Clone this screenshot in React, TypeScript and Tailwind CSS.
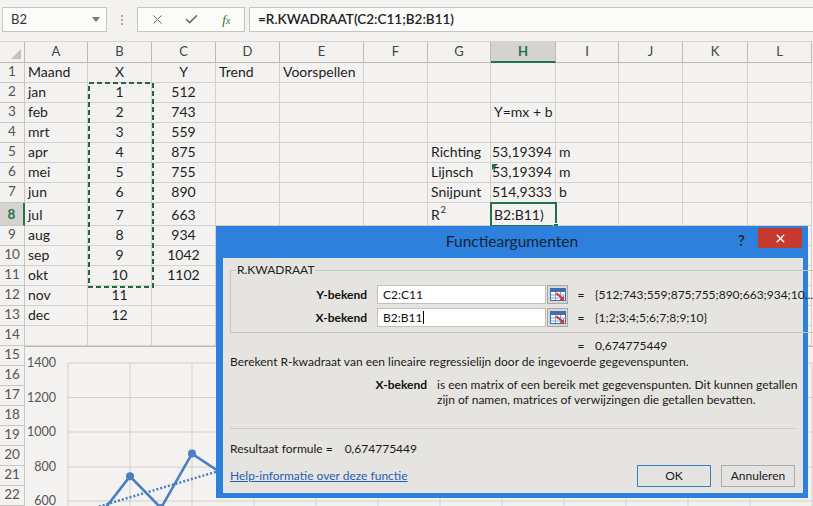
import React from "react";
import { X, Check } from "lucide-react";

const COLS = [
  { id: "A", w: "w-[63px]" },
  { id: "B", w: "w-[64px]" },
  { id: "C", w: "w-[64px]" },
  { id: "D", w: "w-[64px]" },
  { id: "E", w: "w-[84px]" },
  { id: "F", w: "w-[64px]" },
  { id: "G", w: "w-[63px]" },
  { id: "H", w: "w-[65px]" },
  { id: "I", w: "w-[63px]" },
  { id: "J", w: "w-[64px]" },
  { id: "K", w: "w-[65px]" },
  { id: "L", w: "w-[64px]" },
];

type Cell = { v: React.ReactNode; a?: "l" | "c" | "r" };

const months = ["jan", "feb", "mrt", "apr", "mei", "jun", "jul", "aug", "sep", "okt", "nov", "dec"];
const ys = [512, 743, 559, 875, 755, 890, 663, 934, 1042, 1102];

function buildData() {
  const d: Record<number, Record<string, Cell>> = {};
  for (let r = 1; r <= 22; r++) d[r] = {};
  d[1] = {
    A: { v: "Maand" },
    B: { v: "X", a: "c" },
    C: { v: "Y", a: "c" },
    D: { v: "Trend" },
    E: { v: "Voorspellen" },
  };
  months.forEach((m, i) => {
    d[i + 2].A = { v: m };
    d[i + 2].B = { v: String(i + 1), a: "c" };
    if (i < ys.length) d[i + 2].C = { v: String(ys[i]), a: "c" };
  });
  d[3].H = { v: "Y=mx + b" };
  d[5].G = { v: "Richting" };
  d[5].H = { v: "53,19394", a: "r" };
  d[5].I = { v: "m" };
  d[6].G = { v: "Lijnsch" };
  d[6].H = { v: "53,19394", a: "r" };
  d[6].I = { v: "m" };
  d[7].G = { v: "Snijpunt" };
  d[7].H = { v: "514,9333", a: "r" };
  d[7].I = { v: "b" };
  d[8].G = {
    v: (
      <span>
        R<sup className="text-[9px] top-[-7px] ml-[1px]">2</sup>
      </span>
    ),
  };
  d[8].H = { v: "B2:B11)" };
  return d;
}

const data = buildData();

function FormulaBar() {
  return (
    <div className="h-[42px] flex items-start pt-[7px] pl-[2px] border-b border-[#d8d6d3]">
      <div className="w-[105px] h-[25px] bg-[#fbfbfa] border border-[#c6c4c1] flex items-center justify-between pl-[8px] pr-[6px] text-[13px] text-[#333]">
        <span>B2</span>
        <svg width="8" height="5" viewBox="0 0 8 5">
          <path d="M0 0 L8 0 L4 5 Z" fill="#777" />
        </svg>
      </div>
      <div className="w-[30px] h-[25px] flex flex-col items-center justify-center gap-[2px]">
        <span className="w-[2px] h-[2px] bg-[#aaa]" />
        <span className="w-[2px] h-[2px] bg-[#aaa]" />
        <span className="w-[2px] h-[2px] bg-[#aaa]" />
      </div>
      <div className="w-[108px] h-[25px] bg-[#fbfbfa] border border-[#c6c4c1] flex items-center">
        <span className="w-[36px] flex justify-center pl-[4px]">
          <X size={15} strokeWidth={1.6} color="#6b6b6b" />
        </span>
        <span className="w-[36px] flex justify-center">
          <Check size={15} strokeWidth={2.6} color="#6b6b6b" />
        </span>
        <span className="w-[36px] flex justify-center items-baseline text-[13px] italic text-[#3f6b2a] font-['Liberation_Serif',serif]">
          f<span className="text-[10px]">x</span>
        </span>
      </div>
      <div className="flex-1 ml-[4px] h-[25px] bg-[#fbfbfa] border border-r-0 border-[#c6c4c1] flex items-center pl-[8px] text-[13.5px] font-semibold text-[#222]">
        =R.KWADRAAT(C2:C11;B2:B11)
      </div>
    </div>
  );
}

function HeaderRow() {
  return (
    <div className="flex h-[21px]">
      <div className="w-[25px] shrink-0 border-r border-b border-[#bdbbb8] flex items-end justify-end p-[3px]">
        <svg width="10" height="10" viewBox="0 0 10 10">
          <path d="M10 0 L10 10 L0 10 Z" fill="#c4c2bf" />
        </svg>
      </div>
      {COLS.map((c) =>
        c.id === "H" ? (
          <div
            key={c.id}
            className={`${c.w} shrink-0 bg-[#d5d3cf] border-r border-[#bdbbb8] border-b-2 border-b-[#217346] flex items-center justify-center text-[13px] font-bold text-[#217346]`}
          >
            {c.id}
          </div>
        ) : (
          <div
            key={c.id}
            className={`${c.w} shrink-0 border-r border-b border-[#bdbbb8] flex items-center justify-center text-[13px] text-[#444]`}
          >
            {c.id}
          </div>
        )
      )}
    </div>
  );
}

function Row({ r }: { r: number }) {
  const isActive = r === 8;
  return (
    <div className={`flex ${isActive ? "h-[23px]" : "h-[20px]"}`}>
      <div
        className={`w-[25px] shrink-0 border-b border-[#c9c7c4] flex items-end justify-center pb-[1px] text-[13.5px] ${
          isActive
            ? "bg-[#d5d3cf] border-r-2 border-r-[#217346] text-[#217346] font-bold"
            : "border-r text-[#555]"
        }`}
      >
        {r}
      </div>
      {COLS.map((c) => {
        const cell = data[r][c.id];
        const align = cell?.a === "c" ? "justify-center" : cell?.a === "r" ? "justify-end" : "justify-start";
        return (
          <div
            key={c.id}
            className={`${c.w} shrink-0 border-r border-b border-[#d3d1ce] flex items-end px-[3px] pb-[1px] leading-[18px] text-[14px] text-[#1e1e1e] whitespace-nowrap ${align}`}
          >
            {cell?.v}
          </div>
        );
      })}
    </div>
  );
}

function Chart() {
  const yOf = (v: number) => 153 - ((v - 600) / 200) * 34.5;
  const xOf = (i: number) => 74 + (i - 1) * 31;
  const pts = ys.map((v, i) => [xOf(i + 1), yOf(v)]);
  const grid = [15, 49.5, 84, 119, 153];
  const labels = ["1400", "1200", "1000", "800", "600"];
  const vlines = Array.from({ length: 13 }, (_, i) => 43 + i * 62);
  const t = (x: number) => 53.19394 * x + 514.9333;
  return (
    <div className="absolute left-[25px] top-[346px] w-[788px] h-[160px] bg-[#f3f2f0] border-t border-[#bcbab6]">
      <svg width="788" height="160" viewBox="0 -1 788 160">
        {grid.map((y) => (
          <line key={y} x1="43" x2="788" y1={y} y2={y} stroke="#d2d0cd" strokeWidth="1" />
        ))}
        {vlines.map((x) => (
          <line key={x} x1={x} x2={x} y1="15" y2="170" stroke="#d2d0cd" strokeWidth="1" />
        ))}
        {labels.map((l, i) => (
          <text key={l} x="31" y={grid[i] + 4} textAnchor="end" fontSize="12.5" fill="#555" fontFamily="Lato, sans-serif">
            {l}
          </text>
        ))}
        <line
          x1={xOf(0.5)}
          y1={yOf(t(0.5))}
          x2={xOf(12)}
          y2={yOf(t(12))}
          stroke="#4a7fc1"
          strokeWidth="2.5"
          strokeDasharray="2 2"
        />
        <polyline points={pts.map((p) => p.join(",")).join(" ")} fill="none" stroke="#4a7fc1" strokeWidth="2.6" />
        {pts.map((p, i) => (
          <circle key={i} cx={p[0]} cy={p[1]} r="4" fill="#4a7fc1" />
        ))}
      </svg>
    </div>
  );
}

function RefButton() {
  return (
    <div className="ml-[1px] w-[21px] h-[19px] bg-[#d9d7d3] border border-[#aaa8a4] flex items-center justify-center">
      <svg width="16" height="13" viewBox="0 0 16 13">
        <rect x="0.5" y="0.5" width="15" height="12" fill="#fff" stroke="#3f6fb0" />
        <rect x="1" y="1" width="14" height="3" fill="#3f6fb0" />
        <line x1="1" x2="15" y1="7" y2="7" stroke="#7fa3d6" />
        <line x1="1" x2="15" y1="10" y2="10" stroke="#7fa3d6" />
        <line x1="5.5" x2="5.5" y1="4" y2="12" stroke="#7fa3d6" />
        <line x1="10.5" x2="10.5" y1="4" y2="12" stroke="#7fa3d6" />
        <path d="M7 4.5 L12.5 9 L14 7.5 L14 12 L9.5 12 L11 10.5 L5.5 6 Z" fill="#d43a2f" />
      </svg>
    </div>
  );
}

function ArgRow({ label, value, result, cursor }: { label: string; value: string; result: string; cursor?: boolean }) {
  return (
    <div className="flex items-center h-[19px]">
      <div className="w-[136px] text-right font-bold text-[#111]">{label}</div>
      <div className="ml-[10px] w-[169px] h-[19px] bg-white border border-[#c2c0bc] flex items-center pl-[5px] text-[#111]">
        {value}
        {cursor && <span className="w-[1px] h-[13px] bg-black ml-[1px]" />}
      </div>
      <RefButton />
      <div className="ml-[8px] w-[10px] text-center">=</div>
      <div className="ml-[9px] whitespace-nowrap">{result}</div>
    </div>
  );
}

function Dialog() {
  return (
    <div className="absolute left-[216px] top-[226px] w-[592px] h-[272px] bg-[#2d80dc] flex flex-col pl-[7px] pr-[5px] pb-[5px] font-['Lato',sans-serif] text-[12px] text-[#1a1a1a]">
      <div className="relative h-[32px] flex items-center justify-center text-[15.5px] text-[#16233a] pr-[2px]">
        Functieargumenten
        <div className="absolute right-[1px] top-[2px] flex items-start">
          <span className="mr-[13px] mt-[1px] text-[15px] font-bold text-[#1f2a3a]">?</span>
          <div className="w-[44px] h-[20px] bg-[#c6392f] flex items-center justify-center">
            <X size={13} strokeWidth={2.6} color="#fff" />
          </div>
        </div>
      </div>
      <div className="flex-1 bg-[#e6e4e0] px-[7px] flex flex-col">
        <fieldset className="mt-[4px] mr-[1px] border border-[#c8c5c1] pl-0 pr-0 pt-[7px] pb-[5px] flex flex-col gap-[4px]">
          <legend className="ml-[5px] px-[1px] leading-[16px] text-[#222]">R.KWADRAAT</legend>
          <ArgRow label="Y-bekend" value="C2:C11" result="{512;743;559;875;755;890;663;934;10..." />
          <ArgRow label="X-bekend" value="B2:B11" result="{1;2;3;4;5;6;7;8;9;10}" cursor />
        </fieldset>
        <div className="mt-[5px] h-[15px] flex items-center">
          <div className="ml-[346px] w-[10px] text-center">=</div>
          <div className="ml-[9px]">0,674775449</div>
        </div>
        <div className="mt-[1px] h-[15px] leading-[15px] whitespace-nowrap">
          Berekent R-kwadraat van een lineaire regressielijn door de ingevoerde gegevenspunten.
        </div>
        <div className="mt-[8px] flex leading-[15px]">
          <div className="w-[197px] shrink-0 text-right font-bold text-[#111]">X-bekend</div>
          <div className="ml-[10px] whitespace-nowrap">
            is een matrix of een bereik met gegevenspunten. Dit kunnen getallen
            <br />
            zijn of namen, matrices of verwijzingen die getallen bevatten.
          </div>
        </div>
        <div className="mt-[21px] mr-[1px] h-[1px] bg-[#cfccc8]" />
        <div className="mt-[12px] h-[15px] flex items-center">
          <span>Resultaat formule =</span>
          <span className="ml-[12px]">0,674775449</span>
        </div>
        <div className="mt-[9px] h-[22px] flex items-center">
          <span className="text-[#1d5fb4] underline">Help-informatie over deze functie</span>
          <div className="flex-1" />
          <div className="w-[74px] h-[22px] bg-[#e3e3e2] border border-[#3c7fbf] flex items-center justify-center">OK</div>
          <div className="ml-[10px] mr-[1px] w-[74px] h-[22px] bg-[#e3e3e2] border border-[#aeaca9] flex items-center justify-center">
            Annuleren
          </div>
        </div>
      </div>
    </div>
  );
}

export default function App() {
  return (
    <div className="relative w-[813px] h-[506px] overflow-hidden bg-[#f3f2f0] font-['Lato',sans-serif]">
      <FormulaBar />
      <HeaderRow />
      {Array.from({ length: 22 }, (_, i) => (
        <Row key={i} r={i + 1} />
      ))}

      {/* copy marquee B2:B11 */}
      <svg className="absolute left-[88px] top-[82px]" width="66" height="206">
        <rect x="1" y="1" width="64" height="204" fill="none" stroke="#23683a" strokeWidth="2" strokeDasharray="5 3" />
      </svg>

      {/* error marker H6 */}
      <svg className="absolute left-[492px] top-[164px]" width="6" height="6">
        <path d="M0 0 L6 0 L0 6 Z" fill="#217346" />
      </svg>

      {/* active cell H8 */}
      <div className="absolute left-[490px] top-[202px] w-[67px] h-[25px] border-2 border-[#217346]" />
      <div className="absolute left-[553px] top-[223px] w-[6px] h-[6px] bg-[#217346] border border-white" />

      <Chart />
      <Dialog />
    </div>
  );
}
